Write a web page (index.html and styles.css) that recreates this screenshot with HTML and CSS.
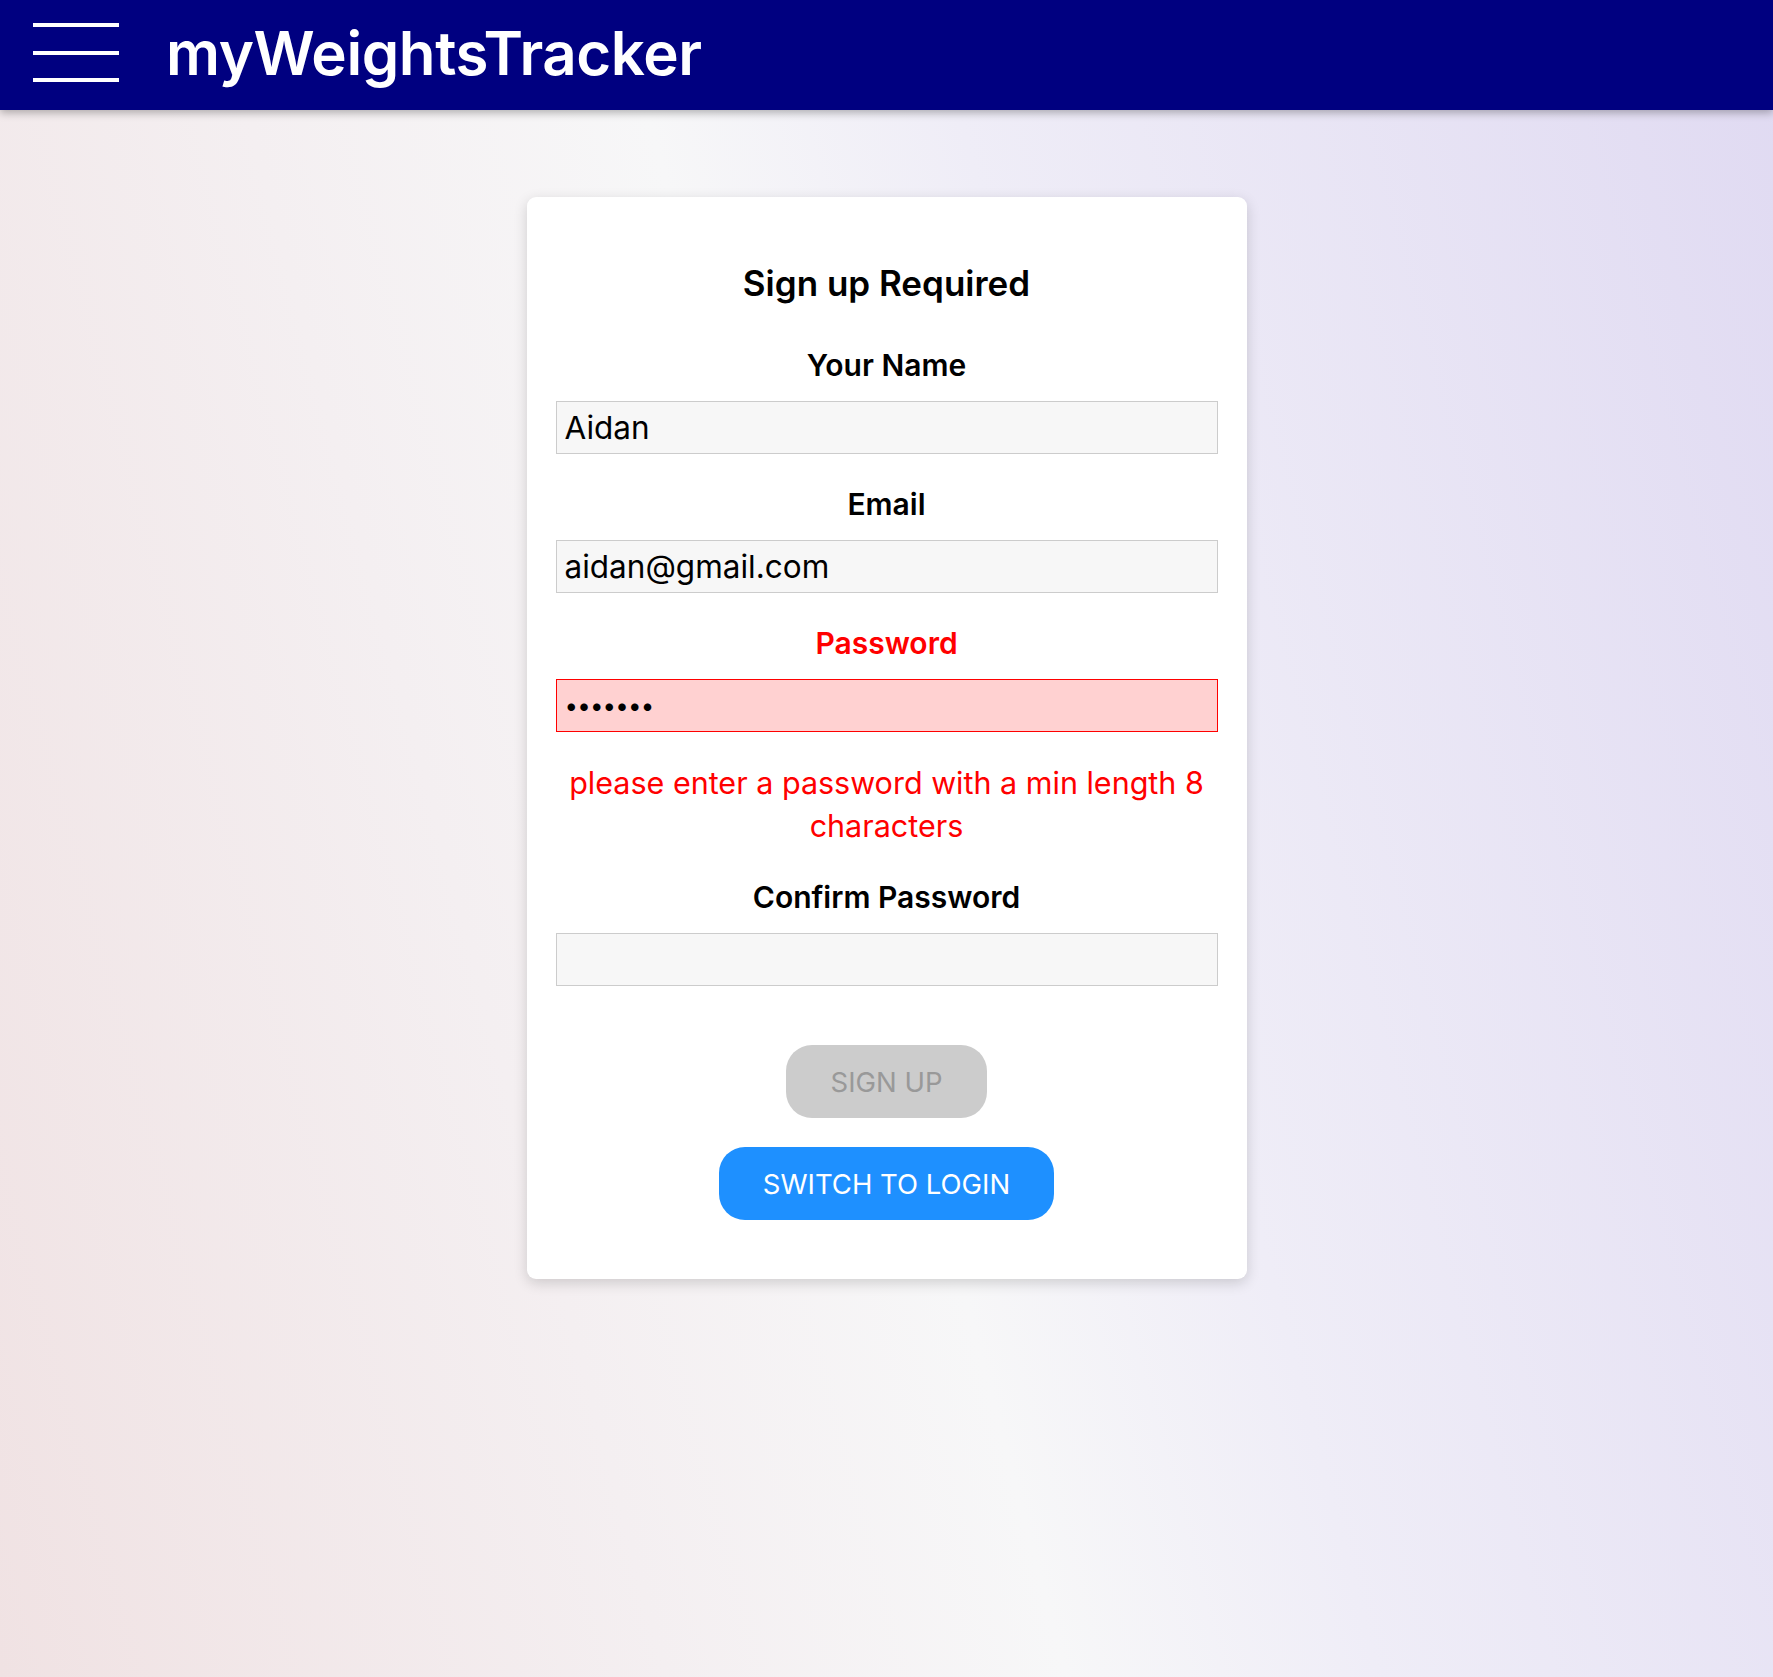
FILE: index.html
```html
<!DOCTYPE html>
<html lang="en">
<head>
<meta charset="utf-8">
<title>myWeightsTracker</title>
<link rel="stylesheet" href="styles.css">
</head>
<body>
<header class="topbar">
  <button class="menu-btn" aria-label="Menu">
    <span class="menu-line"></span>
    <span class="menu-line"></span>
    <span class="menu-line"></span>
  </button>
  <h1 class="brand">myWeightsTracker</h1>
</header>
<main class="page">
  <form class="auth-card">
    <h2 class="auth-title">Sign up Required</h2>
    <div class="field">
      <label class="field-label" for="name">Your Name</label>
      <input class="field-input" id="name" type="text" value="Aidan">
    </div>
    <div class="field">
      <label class="field-label" for="email">Email</label>
      <input class="field-input" id="email" type="text" value="aidan@gmail.com">
    </div>
    <div class="field field-invalid">
      <label class="field-label" for="password">Password</label>
      <input class="field-input" id="password" type="password" value="1234567">
      <p class="field-error">please enter a password with a min length 8 characters</p>
    </div>
    <div class="field">
      <label class="field-label" for="confirm">Confirm Password</label>
      <input class="field-input" id="confirm" type="password" value="">
    </div>
    <div class="actions">
      <button class="btn btn-disabled" type="button" disabled>SIGN UP</button>
      <button class="btn btn-primary" type="button">SWITCH TO LOGIN</button>
    </div>
  </form>
</main>
</body>
</html>
```
FILE: styles.css
```css
* { box-sizing: border-box; }

html, body {
  margin: 0;
  padding: 0;
}

body {
  min-height: 1677px;
  font-family: "Inter", "Noto Sans", sans-serif;
  color: #000;
  background: linear-gradient(75deg, #f0e2e3 0%, #f4eff1 30%, #f7f7f8 48%, #efedf7 62%, #e0daf2 100%);
}

.topbar {
  height: 110px;
  background: #000080;
  display: flex;
  align-items: center;
  padding-left: 33px;
  box-shadow: 0 3px 8px rgba(0, 0, 0, 0.28);
  position: relative;
  z-index: 1;
}

.menu-btn {
  width: 86px;
  height: 59px;
  margin-top: -5px;
  padding: 0;
  border: 0;
  background: transparent;
  display: flex;
  flex-direction: column;
  justify-content: space-between;
}

.menu-line {
  display: block;
  width: 86px;
  height: 4px;
  background: #fff;
}

.brand {
  margin: -5px 0 0 47px;
  color: #fff;
  font-size: 60px;
  font-weight: 600;
  letter-spacing: -0.4px;
  line-height: 1;
}

.page {
  padding-top: 87px;
  padding-bottom: 40px;
}

.auth-card {
  width: 720px;
  margin: 0 auto;
  background: #fff;
  border-radius: 9px;
  box-shadow: 0 4px 14px rgba(0, 0, 0, 0.16);
  padding: 60px 29px 59px;
  text-align: center;
}

.auth-title {
  margin: 0;
  padding-bottom: 6px;
  font-size: 35px;
  font-weight: 600;
  line-height: 52px;
}

.field {
  margin-top: 28px;
}

.field-label {
  display: block;
  font-size: 30px;
  font-weight: 600;
  line-height: 45px;
}

.field-input {
  display: block;
  width: 100%;
  height: 53px;
  margin-top: 13px;
  padding: 0 8px;
  border: 1px solid #cccccc;
  background: #f7f7f7;
  font-family: inherit;
  font-size: 31.5px;
  color: #000;
  outline: none;
}

.field-invalid .field-label {
  color: #ff0000;
}

.field-invalid .field-input {
  background: #ffd1d1;
  border-color: #ff0000;
  font-size: 24px;
  letter-spacing: -0.8px;
}

.field-error {
  margin: 29px 0 0;
  color: #ff0000;
  font-size: 30.5px;
  line-height: 43px;
}

.actions {
  margin-top: 59px;
  display: flex;
  flex-direction: column;
  align-items: center;
  gap: 29px;
}

.btn {
  height: 73px;
  padding: 0 44px;
  border: 0;
  border-radius: 26px;
  font-family: inherit;
  font-size: 27.5px;
  font-weight: 400;
}

.btn-disabled {
  background: #cccccc;
  color: #999999;
}

.btn-primary {
  background: #1e90ff;
  color: #fff;
}
```
